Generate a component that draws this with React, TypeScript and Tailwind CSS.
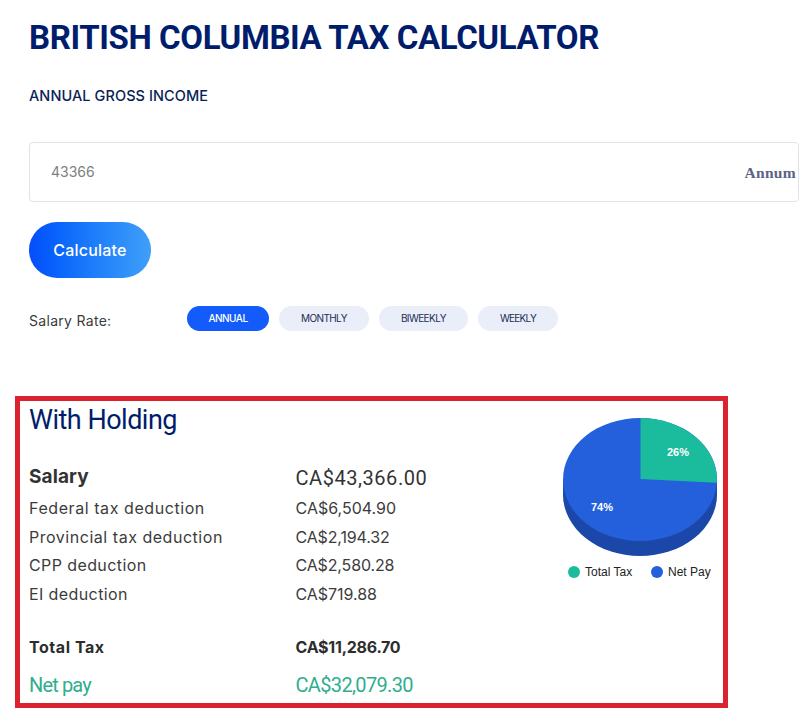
import React, { useState } from "react";

interface Row {
  label: string;
  amount: string;
  rowClass: string;
  labelClass: string;
  amountClass: string;
}

const rates = [
  { label: "ANNUAL", width: "w-[82px]", tracking: "tracking-[-0.5px]" },
  { label: "MONTHLY", width: "w-[90px]", tracking: "tracking-[-0.6px]" },
  { label: "BIWEEKLY", width: "w-[89px]", tracking: "tracking-[-0.6px]" },
  { label: "WEEKLY", width: "w-[80px]", tracking: "tracking-[-0.75px]" },
];

const rows: Row[] = [
  {
    label: "Salary",
    amount: "CA$43,366.00",
    rowClass: "h-[34px] pt-[1px] text-[#333]",
    labelClass: "text-[19px] font-bold tracking-[0.1px]",
    amountClass: "font-[Roboto,sans-serif] text-[20px] tracking-[0.55px]",
  },
  {
    label: "Federal tax deduction",
    amount: "CA$6,504.90",
    rowClass: "h-[28px] text-[#3c3c3c]",
    labelClass: "text-[16px] tracking-[0.57px]",
    amountClass: "text-[16px] tracking-[0px]",
  },
  {
    label: "Provincial tax deduction",
    amount: "CA$2,194.32",
    rowClass: "h-[29px] text-[#3c3c3c]",
    labelClass: "text-[16px] tracking-[0.53px]",
    amountClass: "text-[16px] tracking-[-0.15px]",
  },
  {
    label: "CPP deduction",
    amount: "CA$2,580.28",
    rowClass: "h-[28px] text-[#3c3c3c]",
    labelClass: "text-[16px] tracking-[0.4px]",
    amountClass: "text-[16px] tracking-[-0.15px]",
  },
  {
    label: "EI deduction",
    amount: "CA$719.88",
    rowClass: "h-[29px] text-[#3c3c3c]",
    labelClass: "text-[16px] tracking-[0.4px]",
    amountClass: "text-[16px] tracking-[-0.05px]",
  },
  {
    label: "Total Tax",
    amount: "CA$11,286.70",
    rowClass: "mt-[24px] h-[29px] text-[#2d2d2d]",
    labelClass: "text-[16px] font-bold tracking-[0.55px]",
    amountClass: "text-[16px] font-bold tracking-[-0.25px]",
  },
  {
    label: "Net pay",
    amount: "CA$32,079.30",
    rowClass: "mt-[5px] h-[38px] font-[Roboto,sans-serif] text-[#2fae8e]",
    labelClass: "text-[20px] tracking-[-0.85px]",
    amountClass: "text-[20px] tracking-[-0.65px]",
  },
];

const PieChart: React.FC = () => (
  <svg width="154" height="138" viewBox="0 0 154 138" className="block">
    <path d="M0 61.5V76.5A77 61.5 0 0 0 154 76.5V61.5Z" fill="#1b48a8" />
    <ellipse cx="77" cy="61.5" rx="77" ry="61.5" fill="#2460db" />
    <path d="M77.5 61V0A77 61.5 0 0 1 153.8 64.7Z" fill="#1bbc9d" />
    <g
      fill="#fff"
      fontFamily="Liberation Sans, Arial, sans-serif"
      fontSize="11"
      fontWeight="bold"
    >
      <text x="104" y="38">26%</text>
      <text x="28" y="93">74%</text>
    </g>
  </svg>
);

const App: React.FC = () => {
  const [income, setIncome] = useState("43366");
  const [activeRate, setActiveRate] = useState(0);

  return (
    <div className="h-[721px] w-[805px] overflow-hidden bg-white font-[Inter,sans-serif]">
      {/* Header */}
      <div className="pl-[29px] pt-[16px]">
        <h1 className="h-[42px] whitespace-nowrap pt-px font-[Roboto,sans-serif] text-[33px] font-bold leading-[42px] tracking-[-0.4px] text-[#001d6c]">
          BRITISH COLUMBIA TAX CALCULATOR
        </h1>
        <h2 className="mt-[28px] h-5 whitespace-nowrap text-[14.5px] font-medium leading-5 tracking-[0.08px] text-[#0b1f57]">
          ANNUAL GROSS INCOME
        </h2>
      </div>

      {/* Income form */}
      <div className="ml-[29px] mt-[36px] flex h-[60px] w-[770px] items-center rounded-[4px] border border-[#e3e3e6] pl-[21px] pr-[2px]">
        <input
          value={income}
          onChange={(e) => setIncome(e.target.value)}
          className="mb-[2px] min-w-0 flex-1 text-[14px] tracking-[0px] text-[#808080] outline-none"
        />
        <span className="pt-[2px] font-['Liberation_Serif',serif] text-[15.5px] font-bold tracking-[0.3px] text-[#5b6388]">
          Annum
        </span>
      </div>
      <button className="ml-[29px] mt-[20px] block h-[56px] w-[122px] rounded-full bg-linear-to-r from-[#064dfc] to-[#3f9ff8] pb-[1px] text-[16px] font-medium tracking-[0.2px] text-white">
        Calculate
      </button>

      {/* Salary rate */}
      <div className="ml-[29px] mt-[28px] flex h-[25px]">
        <span className="w-[158px] pt-[5px] text-[14px] leading-5 tracking-[0.3px] text-[#3c3c3c]">
          Salary Rate:
        </span>
        <div className="flex gap-[10px]">
          {rates.map((rate, i) => (
            <button
              key={rate.label}
              onClick={() => setActiveRate(i)}
              className={`h-[25px] rounded-full text-[10px] ${rate.width} ${rate.tracking} ${
                i === activeRate
                  ? "bg-[#135cfb] font-medium text-white"
                  : "bg-[#eaeef8] text-[#1d2d55]"
              }`}
            >
              {rate.label}
            </button>
          ))}
        </div>
      </div>

      {/* Results */}
      <div className="ml-[15px] mt-[65px] flex h-[312px] w-[713px] border-[5px] border-[#da232e] pl-[9px]">
        <div className="w-[534px]">
          <h3 className="h-[59px] pt-[2px] font-[Roboto,sans-serif] text-[27px] leading-[34px] tracking-[-0.5px] text-[#001d6c]">
            With Holding
          </h3>
          {rows.map((row) => (
            <div
              key={row.label}
              className={`flex items-center whitespace-nowrap ${row.rowClass}`}
            >
              <span className={`w-[266.5px] ${row.labelClass}`}>{row.label}</span>
              <span className={row.amountClass}>{row.amount}</span>
            </div>
          ))}
        </div>
        <div className="w-[154px] pt-[17px]">
          <PieChart />
          <div className="mt-[8px] flex h-4 items-center pl-[5px] font-['Liberation_Sans',Arial,sans-serif] text-[12px] text-[#222]">
            <span className="h-3 w-3 rounded-full bg-[#1bbc9d]" />
            <span className="ml-[5px] w-[66px] whitespace-nowrap">Total Tax</span>
            <span className="h-3 w-3 rounded-full bg-[#2460db]" />
            <span className="ml-[5px] whitespace-nowrap">Net Pay</span>
          </div>
        </div>
      </div>
    </div>
  );
};

export default App;
